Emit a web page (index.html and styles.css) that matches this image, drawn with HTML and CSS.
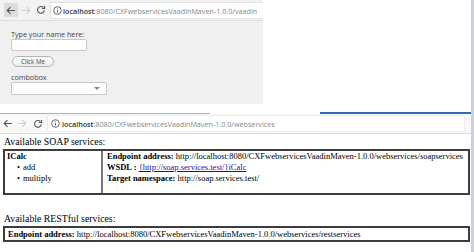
FILE: index.html
```html
<!DOCTYPE html>
<html>
<head>
<meta charset="utf-8">
<link rel="stylesheet" href="styles.css">
</head>
<body>
<div class="frame">
  <div class="main">
    <section class="vaadin">
      <div class="toolbar t1">
        <span class="nav back hover"><svg width="10" height="9" viewBox="0 0 10 9"><path d="M9 4.5H1.5M4.5 1.2L1.2 4.5l3.3 3.3" fill="none" stroke="#555" stroke-width="1.1"/></svg></span>
        <span class="nav fwd"><svg width="10" height="9" viewBox="0 0 10 9"><path d="M1 4.5h7.5M5.5 1.2l3.3 3.3-3.3 3.3" fill="none" stroke="#cfcfcf" stroke-width="1.1"/></svg></span>
        <span class="nav reload"><svg width="10" height="10" viewBox="0 0 10 10"><path d="M8.3 5.4A3.4 3.4 0 1 1 7.4 2.5" fill="none" stroke="#555" stroke-width="1.1"/><path d="M8.6 0.9v2.6H6" fill="none" stroke="#555" stroke-width="1.1"/></svg></span>
        <div class="urlbox">
          <span class="info"><svg width="9" height="9" viewBox="0 0 9 9"><circle cx="4.5" cy="4.5" r="3.8" fill="none" stroke="#555" stroke-width="0.9"/><path d="M4.5 4v2.6" stroke="#555" stroke-width="0.9"/><circle cx="4.5" cy="2.7" r="0.5" fill="#555"/></svg></span>
          <span class="host">localhost</span><span class="path">:8080/CXFwebservicesVaadinMaven-1.0.0/vaadin</span>
        </div>
      </div>
      <div class="app">
        <span class="vlabel">Type your name here:</span>
        <div class="field"></div>
        <button class="btn">Click Me</button>
        <span class="vlabel">combobox</span>
        <div class="combo"><span class="caret"></span></div>
      </div>
    </section>
    <div class="tabline"><span class="tl-gray"></span><span class="tl-gap"></span><span class="tl-blue"></span></div>
    <div class="toolbar t2">
      <span class="nav2 back"><svg width="10" height="9" viewBox="0 0 10 9"><path d="M9 4.5H1.5M4.5 1.2L1.2 4.5l3.3 3.3" fill="none" stroke="#555" stroke-width="1.1"/></svg></span>
      <span class="nav2 fwd"><svg width="10" height="9" viewBox="0 0 10 9"><path d="M1 4.5h7.5M5.5 1.2l3.3 3.3-3.3 3.3" fill="none" stroke="#cfcfcf" stroke-width="1.1"/></svg></span>
      <span class="nav2 reload"><svg width="10" height="10" viewBox="0 0 10 10"><path d="M8.3 5.4A3.4 3.4 0 1 1 7.4 2.5" fill="none" stroke="#555" stroke-width="1.1"/><path d="M8.6 0.9v2.6H6" fill="none" stroke="#555" stroke-width="1.1"/></svg></span>
      <div class="urlbox u2">
        <span class="info"><svg width="9" height="9" viewBox="0 0 9 9"><circle cx="4.5" cy="4.5" r="3.8" fill="none" stroke="#555" stroke-width="0.9"/><path d="M4.5 4v2.6" stroke="#555" stroke-width="0.9"/><circle cx="4.5" cy="2.7" r="0.5" fill="#555"/></svg></span>
        <span class="host">localhost</span><span class="path">:8080/CXFwebservicesVaadinMaven-1.0.0/webservices</span>
      </div>
    </div>
    <div class="services">
      <div class="title">Available SOAP services:</div>
      <div class="soap">
        <div class="iface">
          <b>ICalc</b>
          <ul>
            <li>add</li>
            <li>multiply</li>
          </ul>
        </div>
        <div class="details">
          <div><b>Endpoint address:</b> http://localhost:8080/CXFwebservicesVaadinMaven-1.0.0/webservices/soapservices</div>
          <div><b>WSDL :</b> <a href="#">{http://soap.services.test/}iCalc</a></div>
          <div><b>Target namespace:</b> http://soap.services.test/</div>
        </div>
      </div>
      <div class="title rest-title">Available RESTful services:</div>
      <div class="rest"><b>Endpoint address:</b> http://localhost:8080/CXFwebservicesVaadinMaven-1.0.0/webservices/restservices</div>
    </div>
  </div>
  <div class="strip"></div>
</div>
</body>
</html>
```
FILE: styles.css
```css
html, body {
  margin: 0;
  padding: 0;
  background: #fff;
}
.frame {
  display: flex;
  width: 474px;
  height: 252px;
  overflow: hidden;
}
.main {
  width: 471px;
  display: flex;
  flex-direction: column;
}
.strip {
  width: 3px;
  background: #c9d1dc;
}
.vaadin {
  width: 263px;
  height: 104px;
  display: flex;
  flex-direction: column;
}
.toolbar {
  display: flex;
  align-items: center;
  font-family: "Open Sans", "Noto Sans", sans-serif;
  font-size: 7.2px;
}
.t1 {
  height: 20px;
  background: #f2f2f2;
  padding-left: 4px;
  box-sizing: border-box;
}
.nav, .nav2 {
  display: flex;
  align-items: center;
  justify-content: center;
  height: 14px;
}
.nav.back { width: 14px; }
.nav.fwd { width: 16px; }
.nav.reload { width: 14px; }
.hover {
  background: #dcdcdc;
  border-radius: 1px;
}
.urlbox {
  flex: 1;
  align-self: stretch;
  margin: 2px 0 1px 2px;
  background: #fff;
  border: 1px solid #e2e2e2;
  border-right: none;
  display: flex;
  align-items: center;
  white-space: nowrap;
  overflow: hidden;
}
.info {
  display: flex;
  width: 12px;
  justify-content: center;
}
.host {
  color: #333;
  font-weight: 600;
}
.path {
  color: #888;
}
.app {
  flex: 1;
  background: #f0f0f0;
  border-top: 1px solid #dedede;
  display: flex;
  flex-direction: column;
  align-items: flex-start;
  padding: 8px 0 0 11px;
  font-family: "Open Sans", "Noto Sans", sans-serif;
  font-size: 7.2px;
  color: #464646;
}
.vlabel {
  line-height: 10px;
}
.field {
  width: 76px;
  height: 12px;
  box-sizing: border-box;
  background: #fff;
  border: 1px solid #c8c8c8;
  border-radius: 2px;
}
.btn {
  margin: 5px 0 0 1px;
  width: 42px;
  height: 11px;
  box-sizing: border-box;
  padding: 0;
  border: 1px solid #b4b4b4;
  border-radius: 6px;
  background: linear-gradient(#fdfdfd, #ececec);
  font-family: "Open Sans", "Noto Sans", sans-serif;
  font-size: 6.2px;
  color: #444;
  line-height: 9px;
}
.btn + .vlabel {
  margin-top: 5px;
}
.combo {
  width: 96px;
  height: 13px;
  box-sizing: border-box;
  background: #fff;
  border: 1px solid #c8c8c8;
  border-radius: 2px;
  display: flex;
  align-items: center;
  justify-content: flex-end;
  padding-right: 6px;
}
.caret {
  width: 0;
  height: 0;
  border-left: 3px solid transparent;
  border-right: 3px solid transparent;
  border-top: 3px solid #888;
}
.tabline {
  display: flex;
  height: 2px;
  margin-top: 8px;
}
.tl-gray {
  width: 210px;
  background: #a6b2c4;
  height: 1px;
  margin-top: 1px;
}
.tl-gap {
  width: 110px;
}
.tl-blue {
  flex: 1;
  background: #2d6cb4;
}
.t2 {
  height: 20px;
  background: #f8f8f8;
  border-bottom: 1px solid #dcdcdc;
  box-sizing: border-box;
  padding-left: 2px;
}
.nav2.back { width: 12px; }
.nav2.fwd { width: 16px; }
.nav2.reload { width: 15px; }
.u2 {
  margin: 1px 6px 1px 2px;
  border: 1px solid #ececec;
}
.u2 .info {
  width: 14px;
}
.services {
  font-family: "Liberation Serif", "Times New Roman", serif;
  font-size: 8.5px;
  color: #000;
  padding: 2px 1px 0 3px;
}
.title {
  font-size: 9.8px;
  line-height: 12px;
  margin: 0 0 1px 1px;
}
.soap {
  display: flex;
  height: 46px;
  box-sizing: border-box;
  border: 2px solid #3c3c3c;
  line-height: 11px;
}
.iface {
  flex: 0 0 94px;
  border-right: 2px solid #7a7a7a;
  padding: 0 0 0 2px;
}
.iface ul {
  margin: 0;
  padding-left: 10px;
  list-style: none;
}
.iface li::before {
  content: "\2022";
  display: inline-block;
  width: 6px;
}
.details {
  flex: 1;
  padding-left: 4px;
  white-space: nowrap;
  overflow: hidden;
}
.details a {
  color: #1a0dab;
}
.rest-title {
  margin-top: 18px;
}
.rest {
  height: 16px;
  box-sizing: border-box;
  border: 2px solid #3c3c3c;
  line-height: 12px;
  padding-left: 3px;
  white-space: nowrap;
}
```
